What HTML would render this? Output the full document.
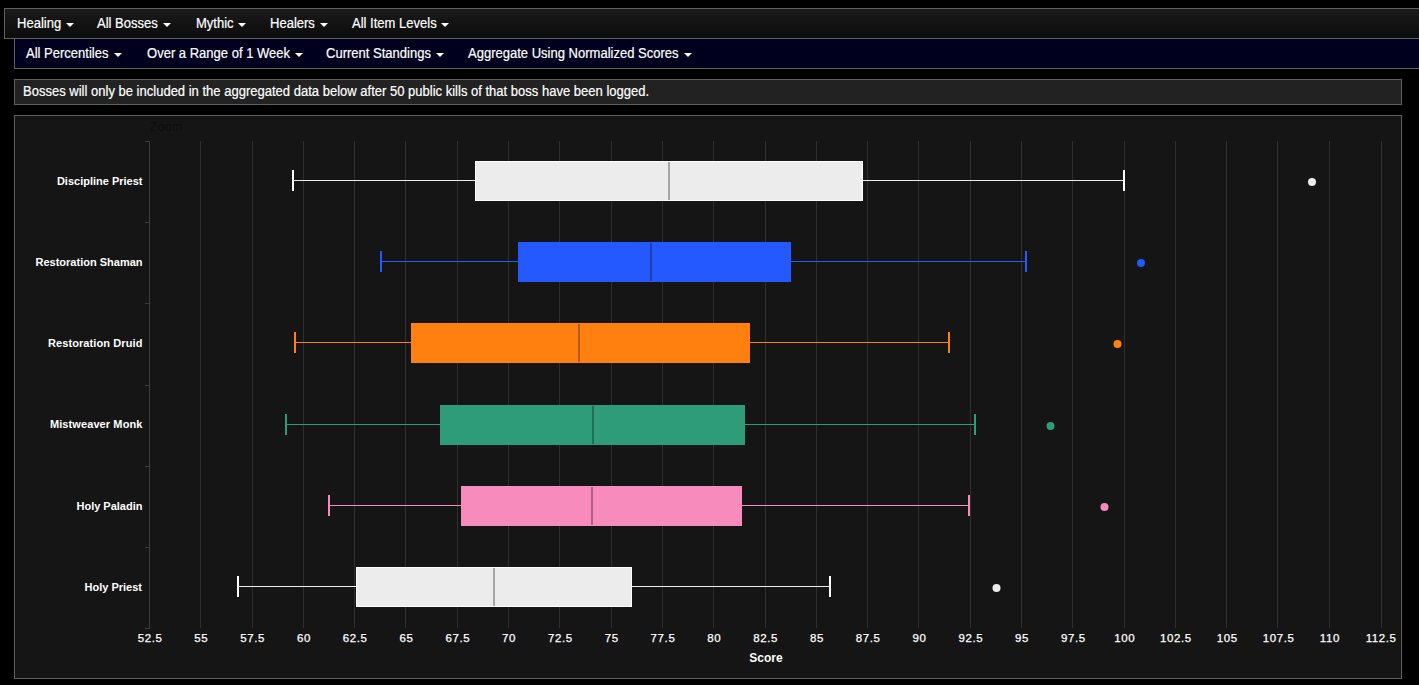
<!DOCTYPE html>
<html><head><meta charset="utf-8"><style>
html,body{margin:0;padding:0;background:#000;width:1419px;height:685px;overflow:hidden;position:relative;font-family:"Liberation Sans", sans-serif;}
.bar{position:absolute;box-sizing:border-box;border:1px solid #5f5f5f;}
#nav1{left:4px;top:8px;width:1500px;height:31px;background:linear-gradient(#1a1a1a,#0c0c0c);}
#nav2{left:14px;top:38px;width:1500px;height:31px;background:#00001e;}
#info{left:14px;top:79px;width:1388px;height:26px;background:#222;}
#chart{left:14px;top:115px;width:1388px;height:564px;background:#151515;}
.ni,.txt{position:absolute;font-size:14px;line-height:16px;color:#fff;white-space:nowrap;transform:scaleX(0.93);transform-origin:0 0;-webkit-text-stroke:0.2px #fff;}
.caret{position:absolute;width:0;height:0;border-top:4px solid #fff;border-left:4px solid transparent;border-right:4px solid transparent;}
svg{position:absolute;left:0;top:0;}
</style></head><body>
<div class="bar" id="nav1"></div>
<div class="bar" id="nav2"></div>
<div class="bar" id="info"></div>
<div class="bar" id="chart"></div>
<div class="ni" style="left:17px;top:15px">Healing</div><div class="caret" style="left:66px;top:23px"></div><div class="ni" style="left:97px;top:15px">All Bosses</div><div class="caret" style="left:163px;top:23px"></div><div class="ni" style="left:195.5px;top:15px">Mythic</div><div class="caret" style="left:238px;top:23px"></div><div class="ni" style="left:270px;top:15px">Healers</div><div class="caret" style="left:320px;top:23px"></div><div class="ni" style="left:352px;top:15px">All Item Levels</div><div class="caret" style="left:441px;top:23px"></div>
<div class="ni" style="left:26px;top:45px">All Percentiles</div><div class="caret" style="left:114px;top:53px"></div><div class="ni" style="left:146.5px;top:45px">Over a Range of 1 Week</div><div class="caret" style="left:295px;top:53px"></div><div class="ni" style="left:326px;top:45px">Current Standings</div><div class="caret" style="left:436px;top:53px"></div><div class="ni" style="left:468px;top:45px">Aggregate Using Normalized Scores</div><div class="caret" style="left:684px;top:53px"></div>
<div class="txt" style="left:23px;top:83px">Bosses will only be included in the aggregated data below after 50 public kills of that boss have been logged.</div>
<svg width="1419" height="685" shape-rendering="crispEdges">
<rect x="200" y="141" width="1" height="487" fill="#2f2f2f"/>
<rect x="252" y="141" width="1" height="487" fill="#2f2f2f"/>
<rect x="303" y="141" width="1" height="487" fill="#2f2f2f"/>
<rect x="354" y="141" width="1" height="487" fill="#2f2f2f"/>
<rect x="405" y="141" width="1" height="487" fill="#2f2f2f"/>
<rect x="457" y="141" width="1" height="487" fill="#2f2f2f"/>
<rect x="508" y="141" width="1" height="487" fill="#2f2f2f"/>
<rect x="559" y="141" width="1" height="487" fill="#2f2f2f"/>
<rect x="611" y="141" width="1" height="487" fill="#2f2f2f"/>
<rect x="662" y="141" width="1" height="487" fill="#2f2f2f"/>
<rect x="713" y="141" width="1" height="487" fill="#2f2f2f"/>
<rect x="765" y="141" width="1" height="487" fill="#2f2f2f"/>
<rect x="816" y="141" width="1" height="487" fill="#2f2f2f"/>
<rect x="867" y="141" width="1" height="487" fill="#2f2f2f"/>
<rect x="918" y="141" width="1" height="487" fill="#2f2f2f"/>
<rect x="970" y="141" width="1" height="487" fill="#2f2f2f"/>
<rect x="1021" y="141" width="1" height="487" fill="#2f2f2f"/>
<rect x="1072" y="141" width="1" height="487" fill="#2f2f2f"/>
<rect x="1124" y="141" width="1" height="487" fill="#2f2f2f"/>
<rect x="1175" y="141" width="1" height="487" fill="#2f2f2f"/>
<rect x="1226" y="141" width="1" height="487" fill="#2f2f2f"/>
<rect x="1277" y="141" width="1" height="487" fill="#2f2f2f"/>
<rect x="1329" y="141" width="1" height="487" fill="#2f2f2f"/>
<rect x="1381" y="141" width="1" height="487" fill="#2f2f2f"/>
<rect x="149" y="141" width="1" height="488" fill="#3c3c3c"/>
<rect x="145" y="141" width="4" height="1" fill="#3c3c3c"/>
<rect x="145" y="222" width="4" height="1" fill="#3c3c3c"/>
<rect x="145" y="303" width="4" height="1" fill="#3c3c3c"/>
<rect x="145" y="385" width="4" height="1" fill="#3c3c3c"/>
<rect x="145" y="466" width="4" height="1" fill="#3c3c3c"/>
<rect x="145" y="547" width="4" height="1" fill="#3c3c3c"/>
<rect x="145" y="628" width="4" height="1" fill="#3c3c3c"/>
<rect x="294" y="180" width="181" height="1" fill="#ececec"/>
<rect x="863" y="180" width="260" height="1" fill="#ececec"/>
<rect x="292" y="170" width="2" height="21" fill="#ffffff"/>
<rect x="1123" y="170" width="2" height="21" fill="#ffffff"/>
<rect x="475" y="161" width="388" height="40" fill="#ffffff"/>
<rect x="476" y="162" width="386" height="38" fill="#ececec"/>
<rect x="668" y="162" width="2" height="38" fill="#a6a6a6"/>
<circle cx="1312" cy="182" r="4" fill="#ececec" shape-rendering="geometricPrecision"/>
<text x="142.5" y="185" text-anchor="end" font-family='"Liberation Sans", sans-serif' font-size="11" font-weight="bold" fill="#fff">Discipline Priest</text>
<rect x="382" y="261" width="136" height="1" fill="#2359ff"/>
<rect x="791" y="261" width="234" height="1" fill="#2359ff"/>
<rect x="380" y="251" width="2" height="21" fill="#2359ff"/>
<rect x="1025" y="251" width="2" height="21" fill="#2359ff"/>
<rect x="518" y="242" width="273" height="40" fill="#2359ff"/>
<rect x="519" y="243" width="271" height="38" fill="#2359ff"/>
<rect x="650" y="243" width="2" height="38" fill="#1b3fae"/>
<circle cx="1141" cy="263" r="4" fill="#2359ff" shape-rendering="geometricPrecision"/>
<text x="142.5" y="266" text-anchor="end" font-family='"Liberation Sans", sans-serif' font-size="11" font-weight="bold" fill="#fff">Restoration Shaman</text>
<rect x="296" y="342" width="115" height="1" fill="#ff800e"/>
<rect x="750" y="342" width="198" height="1" fill="#ff800e"/>
<rect x="294" y="332" width="2" height="21" fill="#ff800e"/>
<rect x="948" y="332" width="2" height="21" fill="#ff800e"/>
<rect x="411" y="323" width="339" height="40" fill="#ff800e"/>
<rect x="412" y="324" width="337" height="38" fill="#ff800e"/>
<rect x="578" y="324" width="2" height="38" fill="#b35a0a"/>
<circle cx="1117.5" cy="344" r="4" fill="#ff800e" shape-rendering="geometricPrecision"/>
<text x="142.5" y="347" text-anchor="end" font-family='"Liberation Sans", sans-serif' font-size="11" font-weight="bold" fill="#fff" letter-spacing="0.1">Restoration Druid</text>
<rect x="287" y="424" width="153" height="1" fill="#2e9b79"/>
<rect x="745" y="424" width="229" height="1" fill="#2e9b79"/>
<rect x="285" y="414" width="2" height="21" fill="#2e9b79"/>
<rect x="974" y="414" width="2" height="21" fill="#2e9b79"/>
<rect x="440" y="405" width="305" height="40" fill="#2e9b79"/>
<rect x="441" y="406" width="303" height="38" fill="#2e9b79"/>
<rect x="592" y="406" width="2" height="38" fill="#216e56"/>
<circle cx="1050.5" cy="426" r="4" fill="#2e9b79" shape-rendering="geometricPrecision"/>
<text x="142.5" y="428" text-anchor="end" font-family='"Liberation Sans", sans-serif' font-size="11" font-weight="bold" fill="#fff" letter-spacing="0.1">Mistweaver Monk</text>
<rect x="330" y="505" width="131" height="1" fill="#f78cbc"/>
<rect x="742" y="505" width="226" height="1" fill="#f78cbc"/>
<rect x="328" y="495" width="2" height="21" fill="#f78cbc"/>
<rect x="968" y="495" width="2" height="21" fill="#f78cbc"/>
<rect x="461" y="486" width="281" height="40" fill="#f78cbc"/>
<rect x="462" y="487" width="279" height="38" fill="#f78cbc"/>
<rect x="591" y="487" width="2" height="38" fill="#ad6283"/>
<circle cx="1104.5" cy="507" r="4" fill="#f78cbc" shape-rendering="geometricPrecision"/>
<text x="142.5" y="510" text-anchor="end" font-family='"Liberation Sans", sans-serif' font-size="11" font-weight="bold" fill="#fff">Holy Paladin</text>
<rect x="239" y="586" width="117" height="1" fill="#ececec"/>
<rect x="632" y="586" width="197" height="1" fill="#ececec"/>
<rect x="237" y="576" width="2" height="21" fill="#ffffff"/>
<rect x="829" y="576" width="2" height="21" fill="#ffffff"/>
<rect x="356" y="567" width="276" height="40" fill="#ffffff"/>
<rect x="357" y="568" width="274" height="38" fill="#ececec"/>
<rect x="493" y="568" width="2" height="38" fill="#a6a6a6"/>
<circle cx="996.5" cy="588" r="4" fill="#ececec" shape-rendering="geometricPrecision"/>
<text x="142.0" y="591" text-anchor="end" font-family='"Liberation Sans", sans-serif' font-size="11" font-weight="bold" fill="#fff">Holy Priest</text>
<text x="150.05" y="642" text-anchor="middle" font-family='"Liberation Sans", sans-serif' font-size="11.5" letter-spacing="0.6" fill="#fff" stroke="#fff" stroke-width="0.25">52.5</text>
<text x="201.35" y="642" text-anchor="middle" font-family='"Liberation Sans", sans-serif' font-size="11.5" letter-spacing="0.6" fill="#fff" stroke="#fff" stroke-width="0.25">55</text>
<text x="252.64" y="642" text-anchor="middle" font-family='"Liberation Sans", sans-serif' font-size="11.5" letter-spacing="0.6" fill="#fff" stroke="#fff" stroke-width="0.25">57.5</text>
<text x="303.94" y="642" text-anchor="middle" font-family='"Liberation Sans", sans-serif' font-size="11.5" letter-spacing="0.6" fill="#fff" stroke="#fff" stroke-width="0.25">60</text>
<text x="355.23" y="642" text-anchor="middle" font-family='"Liberation Sans", sans-serif' font-size="11.5" letter-spacing="0.6" fill="#fff" stroke="#fff" stroke-width="0.25">62.5</text>
<text x="406.53" y="642" text-anchor="middle" font-family='"Liberation Sans", sans-serif' font-size="11.5" letter-spacing="0.6" fill="#fff" stroke="#fff" stroke-width="0.25">65</text>
<text x="457.83" y="642" text-anchor="middle" font-family='"Liberation Sans", sans-serif' font-size="11.5" letter-spacing="0.6" fill="#fff" stroke="#fff" stroke-width="0.25">67.5</text>
<text x="509.12" y="642" text-anchor="middle" font-family='"Liberation Sans", sans-serif' font-size="11.5" letter-spacing="0.6" fill="#fff" stroke="#fff" stroke-width="0.25">70</text>
<text x="560.42" y="642" text-anchor="middle" font-family='"Liberation Sans", sans-serif' font-size="11.5" letter-spacing="0.6" fill="#fff" stroke="#fff" stroke-width="0.25">72.5</text>
<text x="611.71" y="642" text-anchor="middle" font-family='"Liberation Sans", sans-serif' font-size="11.5" letter-spacing="0.6" fill="#fff" stroke="#fff" stroke-width="0.25">75</text>
<text x="663.01" y="642" text-anchor="middle" font-family='"Liberation Sans", sans-serif' font-size="11.5" letter-spacing="0.6" fill="#fff" stroke="#fff" stroke-width="0.25">77.5</text>
<text x="714.31" y="642" text-anchor="middle" font-family='"Liberation Sans", sans-serif' font-size="11.5" letter-spacing="0.6" fill="#fff" stroke="#fff" stroke-width="0.25">80</text>
<text x="765.60" y="642" text-anchor="middle" font-family='"Liberation Sans", sans-serif' font-size="11.5" letter-spacing="0.6" fill="#fff" stroke="#fff" stroke-width="0.25">82.5</text>
<text x="816.90" y="642" text-anchor="middle" font-family='"Liberation Sans", sans-serif' font-size="11.5" letter-spacing="0.6" fill="#fff" stroke="#fff" stroke-width="0.25">85</text>
<text x="868.19" y="642" text-anchor="middle" font-family='"Liberation Sans", sans-serif' font-size="11.5" letter-spacing="0.6" fill="#fff" stroke="#fff" stroke-width="0.25">87.5</text>
<text x="919.49" y="642" text-anchor="middle" font-family='"Liberation Sans", sans-serif' font-size="11.5" letter-spacing="0.6" fill="#fff" stroke="#fff" stroke-width="0.25">90</text>
<text x="970.79" y="642" text-anchor="middle" font-family='"Liberation Sans", sans-serif' font-size="11.5" letter-spacing="0.6" fill="#fff" stroke="#fff" stroke-width="0.25">92.5</text>
<text x="1022.08" y="642" text-anchor="middle" font-family='"Liberation Sans", sans-serif' font-size="11.5" letter-spacing="0.6" fill="#fff" stroke="#fff" stroke-width="0.25">95</text>
<text x="1073.38" y="642" text-anchor="middle" font-family='"Liberation Sans", sans-serif' font-size="11.5" letter-spacing="0.6" fill="#fff" stroke="#fff" stroke-width="0.25">97.5</text>
<text x="1124.67" y="642" text-anchor="middle" font-family='"Liberation Sans", sans-serif' font-size="11.5" letter-spacing="0.6" fill="#fff" stroke="#fff" stroke-width="0.25">100</text>
<text x="1175.97" y="642" text-anchor="middle" font-family='"Liberation Sans", sans-serif' font-size="11.5" letter-spacing="0.6" fill="#fff" stroke="#fff" stroke-width="0.25">102.5</text>
<text x="1227.27" y="642" text-anchor="middle" font-family='"Liberation Sans", sans-serif' font-size="11.5" letter-spacing="0.6" fill="#fff" stroke="#fff" stroke-width="0.25">105</text>
<text x="1278.56" y="642" text-anchor="middle" font-family='"Liberation Sans", sans-serif' font-size="11.5" letter-spacing="0.6" fill="#fff" stroke="#fff" stroke-width="0.25">107.5</text>
<text x="1329.86" y="642" text-anchor="middle" font-family='"Liberation Sans", sans-serif' font-size="11.5" letter-spacing="0.6" fill="#fff" stroke="#fff" stroke-width="0.25">110</text>
<text x="1381.15" y="642" text-anchor="middle" font-family='"Liberation Sans", sans-serif' font-size="11.5" letter-spacing="0.6" fill="#fff" stroke="#fff" stroke-width="0.25">112.5</text>
<text x="766" y="662" text-anchor="middle" font-family='"Liberation Sans", sans-serif' font-size="12" font-weight="bold" fill="#fff">Score</text>
<text x="150" y="131" font-family='"Liberation Sans", sans-serif' font-size="12" letter-spacing="0.5" fill="#0d0d0d">Zoom</text>
</svg>
</body></html>
